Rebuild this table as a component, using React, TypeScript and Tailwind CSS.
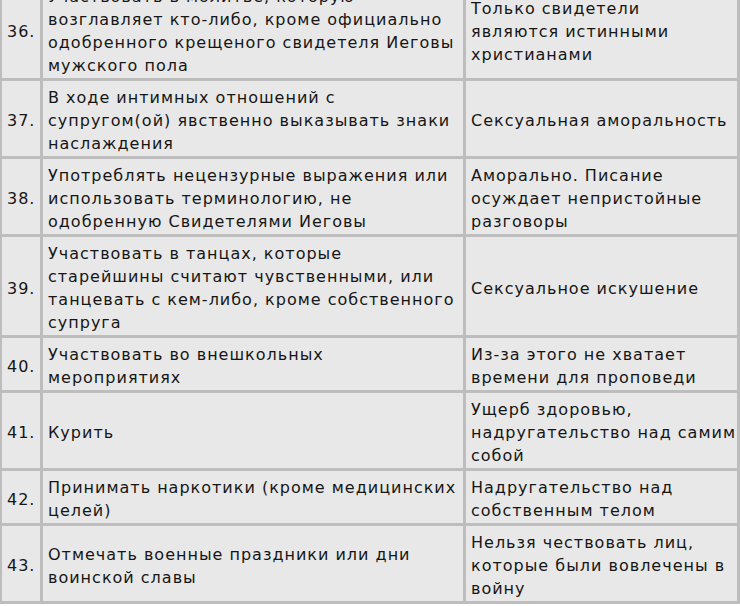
const rows: { n: string; what: string[]; why: string[] }[] = [
  {
    n: '36.',
    what: [
      'Участвовать в молитве, которую',
      'возглавляет кто-либо, кроме официально',
      'одобренного крещеного свидетеля Иеговы',
      'мужского пола',
    ],
    why: ['Только свидетели', 'являются истинными', 'христианами'],
  },
  {
    n: '37.',
    what: ['В ходе интимных отношений с', 'супругом(ой) явственно выказывать знаки', 'наслаждения'],
    why: ['Сексуальная аморальность'],
  },
  {
    n: '38.',
    what: ['Употреблять нецензурные выражения или', 'использовать терминологию, не', 'одобренную Свидетелями Иеговы'],
    why: ['Аморально. Писание', 'осуждает непристойные', 'разговоры'],
  },
  {
    n: '39.',
    what: [
      'Участвовать в танцах, которые',
      'старейшины считают чувственными, или',
      'танцевать с кем-либо, кроме собственного',
      'супруга',
    ],
    why: ['Сексуальное искушение'],
  },
  {
    n: '40.',
    what: ['Участвовать во внешкольных', 'мероприятиях'],
    why: ['Из-за этого не хватает', 'времени для проповеди'],
  },
  {
    n: '41.',
    what: ['Курить'],
    why: ['Ущерб здоровью,', 'надругательство над самим', 'собой'],
  },
  {
    n: '42.',
    what: ['Принимать наркотики (кроме медицинских', 'целей)'],
    why: ['Надругательство над', 'собственным телом'],
  },
  {
    n: '43.',
    what: ['Отмечать военные праздники или дни', 'воинской славы'],
    why: ['Нельзя чествовать лиц,', 'которые были вовлечены в', 'войну'],
  },
];

function Lines({ lines }: { lines: string[] }) {
  return (
    <div className="whitespace-nowrap">
      {lines.map((l, i) => (
        <div key={i}>{l}</div>
      ))}
    </div>
  );
}

export default function App() {
  return (
    <div className="w-[740px] h-[606px] overflow-hidden bg-white">
      <div
        className="-mt-[20px] grid grid-cols-[38px_420px_271px] gap-[3px] bg-[#bdbdbd] pl-[2px] pr-[3px] pb-[3px] text-[16px] leading-[23px] tracking-[1px] text-[#161616]"
        style={{ fontFamily: '"DejaVu Sans", Verdana, sans-serif' }}
      >
        {rows.map((r) => (
          <div key={r.n} className="contents">
            <div className="flex items-center bg-[#e8e8e8] pl-[5px] pt-[5px] pb-[1px]">{r.n}</div>
            <div className="flex items-center bg-[#e8e8e8] px-[5px] pt-[5px] pb-[1px]">
              <Lines lines={r.what} />
            </div>
            <div className="flex items-center bg-[#e8e8e8] px-[5px] pt-[5px] pb-[1px]">
              <Lines lines={r.why} />
            </div>
          </div>
        ))}
      </div>
    </div>
  );
}
